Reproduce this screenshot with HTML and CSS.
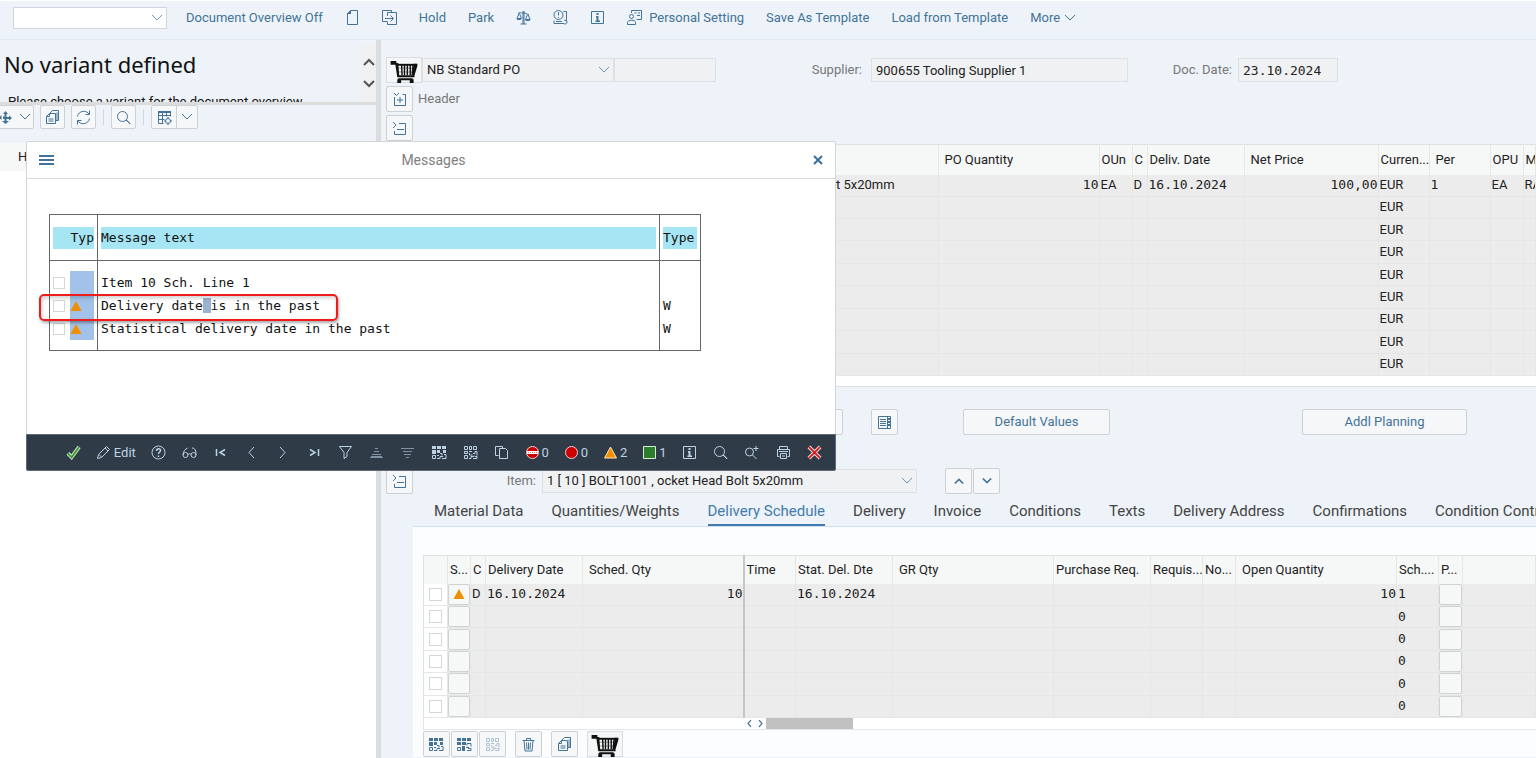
FILE: index.html
```html
<!DOCTYPE html>
<html lang="en">
<head>
    <meta charset="UTF-8">
    <title>Purchase Order</title>
    <link rel="stylesheet" href="styles.css">
</head>
<body>
<svg class="sprite" aria-hidden="true">
    <symbol id="down" viewBox="0 0 12 12"><path d="M1 3l5 5 5-5"/></symbol>
    <symbol id="page" viewBox="0 0 15 15"><path d="M5.500 .5h7v14h-10v-11zM5.500 .5v3h-3"/><path class="solid" d="M2 4l4-4v4z"/></symbol>
    <symbol id="export" viewBox="0 0 15 15"><path d="M5 11.500H.5v-11h9v2M5.500 6V2.500h9v12h-9v-3M3 8.500h8M8.500 5.500l3 3-3 3"/></symbol>
    <symbol id="scale" viewBox="0 0 15 15"><path d="M7 1v13M8 1v13M4.500 14h6M2 3.500c2-2 3 0 5-.5h2c2 .5 3 2 4 1.500M3 3.500l-2 5h4.500l-2-5M11.500 4.500l-2 5H14l-2-5"/><path class="solid" d="M.5 8.500h5c-.5 2-4.500 2-5 0zM9 9.500h5.500c-.5 2-5 2-5.500 0z"/></symbol>
    <symbol id="alertdoc" viewBox="0 0 15 15"><circle cx="5.500" cy="5" r="4.500"/><path d="M5.500 2v3.500M5.500 7v1M10.500 1.500h3v9M1 10.500v3h10M11 14c3 0 3-1 3-3l-3-1M3 11.500h6"/></symbol>
    <symbol id="info" viewBox="0 0 15 15"><path d="M1.500 1.500h12v12h-12z"/><path class="solid" d="M6.500 3h2v2h-2zM6 6h2.500v4.500H10V12H5.500v-1.500h1v-3H6z"/></symbol>
    <symbol id="person" viewBox="0 0 15 15"><circle cx="4.500" cy="6.500" r="2"/><path d="M.5 14.500v-2c0-3 8-3 8 0v2zM4.500 3V.5h10v9h-5M7.500 3h2M11 3h2M10 5.500h3"/></symbol>
    <symbol id="bullets" viewBox="0 0 15 15"><path class="solid" d="M1 7.500l2.500-2.500v5zM7.500 1L10 4H8.500v3h2.500V5.500l3 2.500-3 2.500V9H8.500v2H11l-3.500 3L4 11h2.500V9H5V6.500h1.500V4H5z"/></symbol>
    <symbol id="copy" viewBox="0 0 15 15"><path d="M7.500 .5h6v10h-3M7.500 .5l-3 3M4.500 3.500h6v10h-9v-7zM4.500 3.500v3h-3M3.500 9h5M3.500 11h5M12 2.500v8"/></symbol>
    <symbol id="refresh" viewBox="0 0 15 15"><path d="M1.500 6.500c1-6 9-7 12-2M13.500 .5v4h-4M13.500 8.500c-1 6-9 7-12 2M1.500 14.500v-4h4"/></symbol>
    <symbol id="search" viewBox="0 0 15 15"><circle cx="6.500" cy="6.500" r="5"/><path d="M10 10l4 4M10.500 10l3.500 3.500"/></symbol>
    <symbol id="searchmore" viewBox="0 0 15 15"><circle cx="5.500" cy="7" r="4"/><path d="M8.500 10l4 4M12 1v5M9.500 3.500h5"/></symbol>
    <symbol id="layout" viewBox="0 0 15 15"><path d="M1.500 1.500h12v5M1.500 1.500v12h5M1.500 5.500h12M1.500 9.500h6M5.500 1.500v12M9.500 1.500v5"/><path class="solid" d="M1 1h13v2H1z"/><circle cx="11" cy="11" r="2.500"/><path d="M11 7v2M11 13v2M7 11h2M13 11h2"/></symbol>
    <symbol id="expand" viewBox="0 0 15 15"><path d="M2 1l2.500 2.500L7 1M2.500 5v8.500h11v-11h-3M8 5v6M5 8h6"/></symbol>
    <symbol id="collapse" viewBox="0 0 15 15"><path d="M1 1l3 3-3 3M7 2.500h6.500v11h-11V10M5 8.500h7"/></symbol>
    <symbol id="listdoc" viewBox="0 0 15 15"><path d="M1.500 1.500h12v12h-12zM10.500 1.500v12M3 4.500h6M3 6.500h6M3 8.500h6M3 10.500h6"/><path class="solid" d="M11 3h3v2h-3zM11 6h3v2h-3zM11 9h3v2h-3z"/></symbol>
    <symbol id="trash" viewBox="0 0 15 15"><path d="M1.500 3.500h12M5.500 3V1.500h4V3M3 3.500l1 10.500h7l1-10.500M5.500 5.500l.5 7M7.500 5.500v7M9.500 5.500l-.5 7"/></symbol>
    <symbol id="qr" viewBox="0 0 15 15"><path d="M1.500 1.500h3v3h-3zM6.500 1.500h2v3h-2zM10.500 1.500h3v3h-3zM1.500 6.500h3v2h-3zM1.500 10.500h3v3h-3zM6 6.500h3M6.500 8v2h3M10 8.500h2v-2h2v4M6 13.500h2v-2h3v-1M10 13.500h4v-2h-2"/></symbol>
    <symbol id="selall" viewBox="0 0 15 15"><path class="solid" d="M0 1h4v3H0zM5 1h4v3H5zM10 1h4v3h-4zM0 5h4v4H0zM5 5h3v3H5zM11 5h3v3h-3z"/><path d="M.5 10.500h3v3h-3zM5 13.500h3v-2h3M5 10.500h2M8 8.500h2v2M10 13.500h4v-4h-2"/></symbol>
    <symbol id="selblock" viewBox="0 0 15 15"><path class="solid" d="M0 1h4v3H0zM5 1h4v3H5zM10 1h4v3h-4zM0 5h4v3H0zM5 5h4v3H5zM5 9h3v5H5z"/><path d="M.5 10.500h3v3h-3zM10 13.500h4v-2h-3M10 8.500v-2h4v3M9 10.500h3"/></symbol>
    <symbol id="cart" viewBox="0 0 28 24"><path class="solid" d="M0 1h6v2h2l1 13h16v2H7L5 5H0zM24 4h4v2l-3 10h-2zM8 19h15v2H8zM7 20h4v4H7zM20 20h4v4h-4z"/><path d="M7 5h20" stroke-width="2"/><path d="M11.500 5l.5 11M14.500 5v11M17.500 5v11M20.500 5v11M23.500 5l-1 11" stroke-width="1.500"/><path class="faint" d="M8 8.500h18M8 12.500h17"/></symbol>
    <symbol id="warn" viewBox="0 0 12 12"><path fill="#f09000" stroke="none" d="M6 1l5.500 10H.5z"/></symbol>
    <symbol id="check" viewBox="0 0 16 16"><path d="M2 9l4 4 8-11" fill="none" stroke="#d9e6d5" stroke-width="4"/><path d="M2 9l4 4 8-11" fill="none" stroke="#3a9b35" stroke-width="2"/></symbol>
    <symbol id="pencil" viewBox="0 0 15 15"><path d="M1.500 13.500l1-4 8-8 3 3-8 8zM9 3l3 3M3 9.500l2.500 2.500"/></symbol>
    <symbol id="help" viewBox="0 0 15 15"><circle cx="7.500" cy="7.500" r="6.500"/><path d="M5.500 6c0-3 4-3 4-.5C9.500 7 7.500 7 7.500 9M7.500 10.500v1.500" stroke-width="1.500"/></symbol>
    <symbol id="glasses" viewBox="0 0 15 15"><circle cx="3.500" cy="10" r="2.500"/><circle cx="11.500" cy="10" r="2.500"/><path d="M1 10c0-3 2-6 4.500-7M14 10c0-4-.5-7-4-7M6 9.500c1-1 2-1 3 0"/></symbol>
    <symbol id="first" viewBox="0 0 15 15"><path d="M3.500 4v7M12 4.500l-5 3 5 3" stroke-width="1.500"/></symbol>
    <symbol id="prev" viewBox="0 0 15 15"><path d="M10 2L5 7.500l5 5.500"/></symbol>
    <symbol id="next" viewBox="0 0 15 15"><path d="M5 2l5 5.500L5 13"/></symbol>
    <symbol id="last" viewBox="0 0 15 15"><path d="M11.500 4v7M3 4.500l5 3-5 3" stroke-width="1.500"/></symbol>
    <symbol id="filter" viewBox="0 0 15 15"><path d="M1.500 1.500h12L9 7.500v4l-3 2v-6z"/></symbol>
    <symbol id="asc" viewBox="0 0 15 15"><path d="M6 3.500h3M5 6.500h5M3 9.500h9M1 12.500h13M2 11.500h11"/></symbol>
    <symbol id="desc" viewBox="0 0 15 15"><path d="M1 3.500h13M3 6.500h9M4 9.500h7M6 12.500h3"/></symbol>
    <symbol id="dup" viewBox="0 0 15 15"><path d="M4.500 10.500h-3v-9h7v2M5.500 3.500h6l2 2v8h-8z"/></symbol>
    <symbol id="stop" viewBox="0 0 15 15"><circle cx="7.500" cy="7.500" r="6" fill="#c00" stroke="#f3cfcf"/><path d="M2 7.500h11" stroke="#fff" stroke-width="3"/><path d="M3 7.500h9" stroke="#d66" stroke-dasharray="1 1"/></symbol>
    <symbol id="error" viewBox="0 0 15 15"><circle cx="7.500" cy="7.500" r="6" fill="#c00" stroke="#f3cfcf"/></symbol>
    <symbol id="warning" viewBox="0 0 15 15"><path d="M7.500 2l6 11h-12z" fill="#f09000" stroke="#fbe3c0"/></symbol>
    <symbol id="success" viewBox="0 0 15 15"><path d="M1.500 1.500h12v12h-12z" fill="#2c7d2c" stroke="#d5ecd5"/></symbol>
    <symbol id="print" viewBox="0 0 15 15"><path d="M3.500 4V1.500h8V4M3.500 11.500h-2v-7h12v7h-2M4.500 8.500h6v5h-6zM3 6.500h9M6 11h3"/></symbol>
    <symbol id="cancel" viewBox="0 0 16 16"><path d="M2 2l12 12M14 2L2 14" stroke="#f5dcdc" stroke-width="4"/><path d="M2 2l12 12M14 2L2 14" stroke="#d41c1c" stroke-width="2"/></symbol>
</svg>

<header class="toolbar">
    <select class="command" aria-label="Command"><option></option></select>
    <button class="link">Document Overview Off</button>
    <button class="link" aria-label="Create"><svg class="icon"><use href="#page"/></svg></button>
    <button class="link" aria-label="Other Purchase Order"><svg class="icon"><use href="#export"/></svg></button>
    <button class="link">Hold</button>
    <button class="link">Park</button>
    <button class="link" aria-label="Check"><svg class="icon"><use href="#scale"/></svg></button>
    <button class="link" aria-label="Output"><svg class="icon"><use href="#alertdoc"/></svg></button>
    <button class="link" aria-label="Help"><svg class="icon"><use href="#info"/></svg></button>
    <button class="link"><svg class="icon"><use href="#person"/></svg>Personal Setting</button>
    <button class="link">Save As Template</button>
    <button class="link">Load from Template</button>
    <button class="link more">More<svg class="icon small"><use href="#down"/></svg></button>
</header>

<main class="main">
    <aside class="overview">
        <div class="variant">
            <div class="variant-text">
                <h1>No variant defined</h1>
                <p>Please choose a variant for the document overview</p>
            </div>
            <div class="variant-scroll">
                <svg class="icon small"><use href="#down"/></svg>
                <svg class="icon small"><use href="#down"/></svg>
            </div>
        </div>
        <div class="overview-tools">
            <button class="btn wide cut" aria-label="Selection variant"><svg class="icon"><use href="#bullets"/></svg><svg class="icon small"><use href="#down"/></svg></button>
            <button class="btn" aria-label="Copy"><svg class="icon"><use href="#copy"/></svg></button>
            <button class="btn" aria-label="Refresh"><svg class="icon"><use href="#refresh"/></svg></button>
            <span class="divider"></span>
            <button class="btn" aria-label="Find"><svg class="icon"><use href="#search"/></svg></button>
            <span class="divider"></span>
            <button class="btn wide" aria-label="Layout"><svg class="icon"><use href="#layout"/></svg><i class="split"></i><svg class="icon small"><use href="#down"/></svg></button>
        </div>
        <div class="overview-head">H</div>
        <div class="overview-body"></div>
    </aside>
    <div class="splitter"></div>

    <section class="order">
        <div class="row head-row">
            <button class="cart" aria-label="Purchase order"><svg><use href="#cart"/></svg></button>
            <select class="field type" aria-label="Order type"><option>NB Standard PO</option></select>
            <input class="field number" aria-label="Order number">
            <label class="supplier-label" for="supplier">Supplier:</label>
            <input class="field supplier" id="supplier" value="900655 Tooling Supplier 1">
            <label class="date-label" for="docdate">Doc. Date:</label>
            <input class="field date mono" id="docdate" value="23.10.2024">
        </div>
        <div class="row">
            <button class="btn" id="header-toggle" aria-label="Expand header"><svg class="icon"><use href="#expand"/></svg></button>
            <label class="header-label" for="header-toggle">Header</label>
        </div>
        <div class="row">
            <button class="btn" aria-label="Collapse items"><svg class="icon"><use href="#collapse"/></svg></button>
        </div>

        <div class="items">
            <table class="grid items-grid">
                <colgroup>
                    <col class="w-lead"><col class="w-name"><col class="w-qty"><col class="w-unit"><col class="w-c"><col class="w-date"><col class="w-price"><col class="w-cur"><col class="w-per"><col class="w-unit"><col>
                </colgroup>
                <thead>
                <tr><th></th><th></th><th>PO Quantity</th><th class="tight">OUn</th><th class="tight">C</th><th class="tight">Deliv. Date</th><th>Net Price</th><th class="tight">Curren...</th><th>Per</th><th class="tight">OPU</th><th class="tight">M</th></tr>
                </thead>
                <tbody>
                <tr><td></td><td>ocket Head Bolt 5x20mm</td><td class="num mono">10</td><td>EA</td><td>D</td><td class="mono">16.10.2024</td><td class="num mono">100,00</td><td>EUR</td><td class="mono">1</td><td>EA</td><td>RA</td></tr>
                <tr><td></td><td></td><td></td><td></td><td></td><td></td><td></td><td>EUR</td><td></td><td></td><td></td></tr>
                <tr><td></td><td></td><td></td><td></td><td></td><td></td><td></td><td>EUR</td><td></td><td></td><td></td></tr>
                <tr><td></td><td></td><td></td><td></td><td></td><td></td><td></td><td>EUR</td><td></td><td></td><td></td></tr>
                <tr><td></td><td></td><td></td><td></td><td></td><td></td><td></td><td>EUR</td><td></td><td></td><td></td></tr>
                <tr><td></td><td></td><td></td><td></td><td></td><td></td><td></td><td>EUR</td><td></td><td></td><td></td></tr>
                <tr><td></td><td></td><td></td><td></td><td></td><td></td><td></td><td>EUR</td><td></td><td></td><td></td></tr>
                <tr><td></td><td></td><td></td><td></td><td></td><td></td><td></td><td>EUR</td><td></td><td></td><td></td></tr>
                <tr><td></td><td></td><td></td><td></td><td></td><td></td><td></td><td>EUR</td><td></td><td></td><td></td></tr>
                </tbody>
            </table>
        </div>

        <div class="actions">
            <button class="btn" aria-label="Sort"></button>
            <button class="btn" aria-label="Account list"><svg class="icon"><use href="#listdoc"/></svg></button>
            <button class="btn text defaults">Default Values</button>
            <button class="btn text planning">Addl Planning</button>
        </div>

        <div class="row item-row">
            <button class="btn" aria-label="Collapse item details"><svg class="icon"><use href="#collapse"/></svg></button>
            <label class="item-label" for="item">Item:</label>
            <select class="field item" id="item"><option>1 [ 10 ] BOLT1001 , ocket Head Bolt 5x20mm</option></select>
            <button class="btn step up" aria-label="Previous item"><svg class="icon small"><use href="#down"/></svg></button>
            <button class="btn step" aria-label="Next item"><svg class="icon small"><use href="#down"/></svg></button>
        </div>

        <div class="details">
            <nav class="tabs">
                <a href="#">Material Data</a>
                <a href="#">Quantities/Weights</a>
                <a href="#" class="active">Delivery Schedule</a>
                <a href="#">Delivery</a>
                <a href="#">Invoice</a>
                <a href="#">Conditions</a>
                <a href="#">Texts</a>
                <a href="#">Delivery Address</a>
                <a href="#">Confirmations</a>
                <a href="#">Condition Control</a>
            </nav>
            <div class="schedule">
                <table class="grid schedule-grid">
                    <colgroup>
                        <col class="w-check"><col class="w-status"><col class="w-c"><col class="w-date"><col class="w-qty"><col class="w-time"><col class="w-date"><col class="w-qty"><col class="w-date"><col class="w-time"><col class="w-unit"><col class="w-qty"><col class="w-sch"><col class="w-p"><col>
                    </colgroup>
                    <thead>
                    <tr><th></th><th class="tight">S...</th><th class="tight">C</th><th class="tight">Delivery Date</th><th class="frozen">Sched. Qty</th><th class="tight">Time</th><th class="tight">Stat. Del. Dte</th><th>GR Qty</th><th class="tight">Purchase Req.</th><th class="tight">Requis...</th><th class="tight">No...</th><th>Open Quantity</th><th class="tight">Sch....</th><th class="tight">P...</th><th></th></tr>
                    </thead>
                    <tbody>
                    <tr><td class="sel"><input type="checkbox" aria-label="Select line 1"></td><td class="cell"><button aria-label="Status"><svg class="warn"><use href="#warn"/></svg></button></td><td>D</td><td class="mono">16.10.2024</td><td class="num mono frozen">10</td><td></td><td class="mono">16.10.2024</td><td></td><td></td><td></td><td></td><td class="num mono">10</td><td class="mono">1</td><td class="cell"><button aria-label="Profile"></button></td><td></td></tr>
                    <tr><td class="sel"><input type="checkbox" aria-label="Select line 2"></td><td class="cell"><button aria-label="Status"></button></td><td></td><td></td><td class="frozen"></td><td></td><td></td><td></td><td></td><td></td><td></td><td></td><td class="mono">0</td><td class="cell"><button aria-label="Profile"></button></td><td></td></tr>
                    <tr><td class="sel"><input type="checkbox" aria-label="Select line 3"></td><td class="cell"><button aria-label="Status"></button></td><td></td><td></td><td class="frozen"></td><td></td><td></td><td></td><td></td><td></td><td></td><td></td><td class="mono">0</td><td class="cell"><button aria-label="Profile"></button></td><td></td></tr>
                    <tr><td class="sel"><input type="checkbox" aria-label="Select line 4"></td><td class="cell"><button aria-label="Status"></button></td><td></td><td></td><td class="frozen"></td><td></td><td></td><td></td><td></td><td></td><td></td><td></td><td class="mono">0</td><td class="cell"><button aria-label="Profile"></button></td><td></td></tr>
                    <tr><td class="sel"><input type="checkbox" aria-label="Select line 5"></td><td class="cell"><button aria-label="Status"></button></td><td></td><td></td><td class="frozen"></td><td></td><td></td><td></td><td></td><td></td><td></td><td></td><td class="mono">0</td><td class="cell"><button aria-label="Profile"></button></td><td></td></tr>
                    <tr><td class="sel"><input type="checkbox" aria-label="Select line 6"></td><td class="cell"><button aria-label="Status"></button></td><td></td><td></td><td class="frozen"></td><td></td><td></td><td></td><td></td><td></td><td></td><td></td><td class="mono">0</td><td class="cell"><button aria-label="Profile"></button></td><td></td></tr>
                    </tbody>
                </table>
                <div class="hscroll">
                    <svg class="icon arrow"><use href="#prev"/></svg>
                    <svg class="icon arrow"><use href="#next"/></svg>
                    <span class="thumb"></span>
                </div>
                <div class="schedule-tools">
                    <button class="btn" aria-label="Select all"><svg class="icon"><use href="#selall"/></svg></button>
                    <button class="btn" aria-label="Select block"><svg class="icon"><use href="#selblock"/></svg></button>
                    <button class="btn" aria-label="Deselect all" disabled><svg class="icon"><use href="#qr"/></svg></button>
                    <button class="btn apart" aria-label="Delete"><svg class="icon"><use href="#trash"/></svg></button>
                    <button class="btn apart" aria-label="Copy"><svg class="icon"><use href="#copy"/></svg></button>
                    <button class="cart apart" aria-label="Purchase order"><svg><use href="#cart"/></svg></button>
                </div>
            </div>
        </div>
    </section>
</main>

<div class="dialog" role="dialog" aria-labelledby="dialog-title">
    <div class="dialog-head">
        <button class="menu" aria-label="Menu"><i></i><i></i><i></i></button>
        <h2 id="dialog-title">Messages</h2>
        <button class="close" aria-label="Close"><svg viewBox="0 0 10 10"><path d="M1 1l8 8M9 1L1 9"/></svg></button>
    </div>
    <div class="dialog-body">
        <table class="messages">
            <thead>
            <tr><th class="typ"><span>Typ</span></th><th><span>Message text</span></th><th class="kind"><span>Type</span></th></tr>
            </thead>
            <tbody>
            <tr><td class="typ"><input type="checkbox" aria-label="Item 10"><span class="light"></span></td><td>Item 10 Sch. Line 1</td><td></td></tr>
            <tr><td class="typ"><input type="checkbox" aria-label="Delivery date"><span class="light"><svg class="warn"><use href="#warn"/></svg></span></td><td>Delivery date<mark> </mark>is in the past</td><td>W</td></tr>
            <tr><td class="typ"><input type="checkbox" aria-label="Statistical delivery date"><span class="light"><svg class="warn"><use href="#warn"/></svg></span></td><td>Statistical delivery date in the past</td><td>W</td></tr>
            </tbody>
        </table>
        <div class="highlight"></div>
    </div>
    <div class="dialog-foot">
        <button aria-label="Continue"><svg class="icon"><use href="#check"/></svg></button>
        <button class="edit"><svg class="icon"><use href="#pencil"/></svg>Edit</button>
        <button aria-label="Help"><svg class="icon"><use href="#help"/></svg></button>
        <button aria-label="Details"><svg class="icon"><use href="#glasses"/></svg></button>
        <button aria-label="First page"><svg class="icon"><use href="#first"/></svg></button>
        <button aria-label="Previous page"><svg class="icon"><use href="#prev"/></svg></button>
        <button aria-label="Next page"><svg class="icon"><use href="#next"/></svg></button>
        <button aria-label="Last page"><svg class="icon"><use href="#last"/></svg></button>
        <button aria-label="Filter"><svg class="icon"><use href="#filter"/></svg></button>
        <button aria-label="Sort ascending" disabled><svg class="icon"><use href="#asc"/></svg></button>
        <button aria-label="Sort descending" disabled><svg class="icon"><use href="#desc"/></svg></button>
        <button aria-label="Select all"><svg class="icon"><use href="#selall"/></svg></button>
        <button aria-label="Deselect all"><svg class="icon"><use href="#qr"/></svg></button>
        <button aria-label="Copy"><svg class="icon"><use href="#dup"/></svg></button>
        <button class="count"><svg class="icon"><use href="#stop"/></svg>0</button>
        <button class="count"><svg class="icon"><use href="#error"/></svg>0</button>
        <button class="count"><svg class="icon"><use href="#warning"/></svg>2</button>
        <button class="count"><svg class="icon"><use href="#success"/></svg>1</button>
        <button aria-label="Information"><svg class="icon"><use href="#info"/></svg></button>
        <button aria-label="Find"><svg class="icon"><use href="#search"/></svg></button>
        <button aria-label="Find next"><svg class="icon"><use href="#searchmore"/></svg></button>
        <button aria-label="Print"><svg class="icon"><use href="#print"/></svg></button>
        <button aria-label="Cancel"><svg class="icon"><use href="#cancel"/></svg></button>
    </div>
</div>
</body>
</html>
```
FILE: styles.css
```css
* {
    box-sizing: border-box;
}

body {
    margin: 0;
    height: 100vh;
    display: flex;
    flex-direction: column;
    overflow: hidden;
    position: relative;
    background: #edf3f8;
    color: #222;
    font: 13px/16px Roboto, "Liberation Sans", sans-serif;
}

button, input, select {
    margin: 0;
    font: inherit;
    color: inherit;
}

button {
    padding: 0;
    border: 0;
    background: none;
}

svg {
    display: block;
    flex: none;
    fill: none;
    stroke: currentColor;
}

.sprite {
    display: none;
}

.icon {
    width: 15px;
    height: 15px;
}

.small {
    width: 12px;
    height: 12px;
}

.solid {
    fill: currentColor;
    stroke: none;
}

.faint {
    stroke-opacity: .4;
}

.mono {
    font-family: "DejaVu Sans Mono", "Liberation Mono", monospace;
}

/* top toolbar */
.toolbar {
    display: flex;
    align-items: center;
    gap: 22px;
    height: 40px;
    padding: 0 13px 5px;
    border-top: 1px solid #fff;
    border-bottom: 1px solid #e3e9f5;
    color: #437399;
}

.link {
    display: flex;
    align-items: center;
    gap: 7px;
    white-space: nowrap;
}

.more {
    gap: 4px;
}

select {
    appearance: none;
    background: url("data:image/svg+xml,%3Csvg xmlns='http://www.w3.org/2000/svg' width='12' height='12'%3E%3Cpath d='M1 3l5 5 5-5' fill='none' stroke='%236a93b4'/%3E%3C/svg%3E") no-repeat right 3px center;
}

.command {
    width: 154px;
    height: 22px;
    margin-right: -3px;
    background-color: #fff;
    border: 1px solid #d0d6db;
    border-radius: 0;
}

.main {
    display: flex;
    flex: 1;
    min-height: 0;
}

/* document overview */
.overview {
    display: flex;
    flex-direction: column;
    width: 376px;
    flex: none;
}

.variant {
    display: flex;
    height: 62px;
    overflow: hidden;
    padding-top: 5px;
}

.variant-text {
    flex: 1;
    color: #111;
}

.variant h1 {
    margin: 3px 4px 14px;
    font: 22px/32px "Noto Sans", sans-serif;
}

.variant p {
    margin: 0 8px;
    white-space: nowrap;
}

.variant-scroll {
    display: flex;
    flex-direction: column;
    align-items: center;
    gap: 10px;
    width: 15px;
    padding-top: 11px;
    background: #f0f0f0;
    color: #555;
}

.variant-scroll svg {
    stroke-width: 2px;
}

.variant-scroll svg:first-child, .up svg {
    transform: rotate(180deg);
}

.overview-tools {
    display: flex;
    align-items: center;
    height: 41px;
    padding-bottom: 14px;
    border-top: 3px solid #dcdcdc;
    gap: 6px;
}

.btn {
    display: flex;
    align-items: center;
    justify-content: center;
    width: 27px;
    height: 26px;
    flex: none;
    background: #f6f7f8;
    border: 1px solid #cdd1d4;
    border-radius: 2px;
    color: #437399;
}

.overview-tools .btn {
    width: 25px;
    height: 24px;
}

.overview-tools .wide {
    gap: 4px;
    width: 47px;
}

.overview-tools .cut {
    gap: 6px;
    width: 39px;
    margin-left: -5px;
}

.divider {
    width: 1px;
    height: 16px;
    margin: 0 1px;
    background: #d3d8dc;
}

.split {
    width: 1px;
    height: 22px;
    background: #cdd1d4;
}

.overview-head {
    height: 28px;
    padding: 6px 18px;
    background: #f6f7f7;
}

.overview-body {
    flex: 1;
    background: #fff;
}

.splitter {
    width: 5px;
    flex: none;
    background: #dcdcdc;
}

/* purchase order */
.order {
    flex: 1;
    min-width: 0;
    padding-top: 17px;
}

.row {
    display: flex;
    align-items: center;
    height: 26px;
    padding-left: 5px;
    margin-bottom: 3px;
}

.row label {
    color: #777;
    text-align: right;
}

.field {
    height: 24px;
    padding: 0 5px;
    flex: none;
    background-color: #f0f1f2;
    border: 1px solid #dee1e3;
    border-radius: 0;
}

.cart {
    width: 36px;
    height: 26px;
    padding: 2px 3px 0;
    background: #f4f6f8;
    border: 1px solid #dadde0;
    color: #111;
}

.cart svg {
    width: 28px;
    height: 23px;
}

.type {
    width: 192px;
    padding-left: 4px;
}

.number {
    width: 102px;
}

.supplier-label {
    width: 146px;
    margin-right: 9px;
}

.supplier {
    width: 257px;
    padding-left: 4px;
}

.date-label {
    width: 104px;
    margin-right: 6px;
}

.date {
    width: 100px;
    padding-left: 4px;
}

.row .header-label {
    margin-left: 5px;
}

.items {
    padding: 0 0 10px 37px;
    background: #fff;
    border-bottom: 1px solid #dde1e4;
}

.grid {
    width: 100%;
    table-layout: fixed;
    border-collapse: collapse;
    background: #ececec;
    border-top: 1px solid #dfe1e3;
}

.items-grid {
    height: 232px;
}

.grid th, .grid td {
    padding: 0 0 0 1px;
    overflow: hidden;
    text-align: left;
    white-space: nowrap;
    font-weight: normal;
    border-right: 1px solid #e5e6e6;
}

.grid th {
    height: 28px;
    padding-left: 6px;
    background: #f6f7f7;
}

.items-grid th {
    height: 30px;
}

.grid th.tight {
    padding-left: 2px;
}

.grid td {
    line-height: 14px;
    border-bottom: 1px solid #e5e6e6;
}

.grid .num {
    padding: 0;
    text-align: right;
}

.w-lead { width: 329px; }
.w-name { width: 191px; }
.w-qty { width: 161px; }
.w-unit { width: 33px; }
.w-c { width: 15px; }
.w-date { width: 97px; }
.w-price { width: 134px; }
.w-cur { width: 51px; }
.w-per { width: 61px; }
.w-check { width: 24px; }
.w-status { width: 23px; }
.w-time { width: 52px; }
.w-sch { width: 42px; }
.w-p { width: 24px; }

.actions {
    display: flex;
    padding: 22px 0 33px 435px;
}

.actions .btn {
    margin-right: 28px;
}

.actions .defaults {
    width: 147px;
    margin: 0 192px 0 37px;
}

.actions .planning {
    width: 165px;
    margin: 0;
}

.item-row {
    margin: 0;
}

.item-label {
    width: 123px;
    margin-right: 6px;
}

.item {
    width: 375px;
    padding-left: 4px;
    margin-right: 28px;
}

.step {
    margin-right: 1px;
}

.step svg {
    width: 10px;
    stroke-width: 2px;
}

.details {
    margin-left: 32px;
    background: #fcfdfe;
}

.tabs {
    display: flex;
    gap: 28px;
    height: 33px;
    padding-left: 21px;
    overflow: hidden;
    background: #edf3f8;
    border-bottom: 1px solid #cfe2f1;
    font-size: 15px;
    line-height: 34px;
}

.tabs a {
    color: #444;
    text-decoration: none;
    white-space: nowrap;
}

.tabs .active {
    color: #437cac;
    border-bottom: 2px solid #437cac;
}

.schedule {
    padding: 28px 0 0 10px;
}

.schedule-grid {
    height: 163px;
    border-left: 1px solid #dfe1e3;
}

.grid .frozen {
    border-right: 2px solid #c4c6c8;
}

.grid .sel {
    padding-left: 5px;
    background: #fff;
}

input[type=checkbox] {
    display: block;
    appearance: none;
    width: 13px;
    height: 13px;
    background: #fff;
    border: 1px solid #d5d7d9;
}

.grid .cell {
    padding: 0;
}

.cell button {
    display: flex;
    align-items: center;
    justify-content: center;
    width: 100%;
    height: 21px;
    background: #f6f7f7;
    border: 1px solid #d0d3d5;
    border-radius: 2px;
}

.warn {
    width: 12px;
    height: 12px;
}

.hscroll {
    display: flex;
    align-items: center;
    height: 12px;
    padding-left: 320px;
    background: #fff;
    border: 1px solid #e3e6e8;
    border-width: 0 0 1px 1px;
    color: #437399;
}

.arrow {
    width: 11px;
    height: 9px;
    stroke-width: 2px;
}

.thumb {
    width: 87px;
    height: 11px;
    background: #c1c1c1;
}

.schedule-tools {
    display: flex;
    gap: 1px;
    padding-top: 1px;
}

.schedule-tools .apart {
    margin-left: 8px;
}

.btn:disabled svg {
    opacity: .4;
}

/* messages dialog */
.dialog {
    position: absolute;
    left: 26px;
    top: 141px;
    width: 810px;
    background: #fff;
    border: 1px solid #cfd6dc;
    border-bottom: 0;
    border-radius: 2px;
}

.dialog-head {
    display: flex;
    align-items: center;
    justify-content: space-between;
    height: 37px;
    padding: 0 12px;
    border-bottom: 1px solid #dcdcdc;
}

.dialog h2 {
    margin: 0;
    color: #808080;
    font-size: 14px;
    font-weight: normal;
}

.menu {
    display: flex;
    flex-direction: column;
    gap: 2px;
    width: 15px;
}

.menu i {
    height: 2px;
    background: #437399;
}

.close svg {
    width: 10px;
    height: 10px;
    stroke: #3b6f9b;
    stroke-width: 2px;
}

.dialog-body {
    position: relative;
    height: 255px;
    padding: 35px 22px;
}

.messages {
    width: 652px;
    table-layout: fixed;
    border-collapse: collapse;
    border: 1px solid #666;
    font: 13px/22px "DejaVu Sans Mono", "Liberation Mono", monospace;
    color: #111;
}

.messages th, .messages td {
    padding: 0 3px;
    border: solid #666;
    border-width: 0 1px;
    text-align: left;
    font-weight: normal;
    white-space: pre;
}

.messages th {
    height: 46px;
    border-bottom-width: 1px;
}

.messages th span {
    display: block;
    background: #a6e6f4;
    white-space: nowrap;
}

.messages td {
    height: 23px;
}

.messages tbody tr:first-child td {
    height: 33px;
    padding-top: 10px;
}

.messages tbody tr:last-child td {
    height: 33px;
    padding-bottom: 10px;
}

.messages .typ {
    width: 48px;
    text-align: right;
}

.messages .kind {
    width: 41px;
}

td.typ input {
    float: left;
    margin-top: 6px;
    width: 12px;
    height: 12px;
}

.light {
    display: flex;
    align-items: center;
    float: right;
    width: 24px;
    height: 23px;
    background: #a3c2ea;
}

.messages mark {
    background: #9ab3cf;
}

.highlight {
    position: absolute;
    left: 12px;
    top: 115px;
    width: 299px;
    height: 27px;
    border: 2px solid #ee1c1c;
    border-radius: 5px;
    box-shadow: 1px 2px 3px #0005, inset 1px 2px 4px #0003;
}

.dialog-foot {
    display: flex;
    height: 37px;
    margin: 0 -1px;
    padding: 0 5px 0 31px;
    background: #2f3c48;
    border: 1px solid #5f6b76;
    border-radius: 0 0 2px 2px;
    color: #bdd2e3;
}

.dialog-foot button {
    display: flex;
    align-items: center;
    justify-content: center;
    flex: 1 0 31px;
}

.dialog-foot .edit {
    flex-basis: 53px;
    gap: 3px;
}

.dialog-foot .count {
    flex-basis: 39px;
    gap: 2px;
}

.dialog-foot button:disabled {
    color: #8193a2;
}
```
